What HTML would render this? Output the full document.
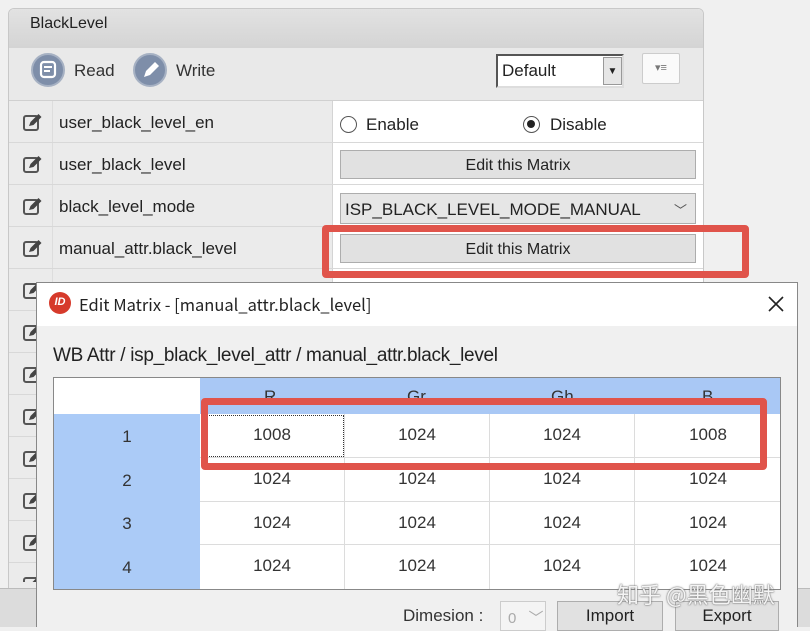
<!DOCTYPE html>
<html><head><meta charset="utf-8"><style>
*{box-sizing:border-box;margin:0;padding:0}
body{width:810px;height:627px;overflow:hidden;background:#f0f0f0;position:relative;font-family:"Liberation Sans",Arial,sans-serif;color:#222}
.a{position:absolute}
.panel{left:8px;top:8px;width:696px;height:600px;border:1px solid #c8c8c8;border-radius:6px 6px 0 0;background:#fff;overflow:hidden}
.hdr{left:0;top:0;width:100%;height:39px;background:linear-gradient(#e2e2e2,#d4d4d4);font-size:16px;padding:6px 0 0 21px;color:#222}
.tb{left:0;top:39px;width:100%;height:53px;background:#e9e9e9;border-bottom:1px solid #d0d0d0}
.circ{width:34px;height:34px;border-radius:50%;background:#7e8ea9;border:2px solid #a6b1c3}
.tbt{font-size:17px;color:#333}
.row{left:0;width:100%;height:42px;border-bottom:1px solid #d8d8d8}
.ic{left:0;width:44px;height:100%;background:#ebebeb;border-right:1px solid #ddd}
.nm{left:44px;width:280px;height:100%;background:#ebebeb;border-right:1px solid #d4d4d4;font-size:17px;padding:12px 0 0 6px;color:#222}
.btn{background:#e1e1e1;border:1px solid #adadad;font-size:16px;text-align:center;color:#222}
.red{border:7px solid #e0544b;border-radius:4px}
.cell{text-align:center;font-size:17px;color:#333;border-right:1px solid #dcdcdc;border-bottom:1px solid #dcdcdc;background:#fff}
.rh{text-align:center;font-size:17px;color:#333;background:#abcbf7}
</style></head><body>
<div class="a panel">
 <div class="a hdr">BlackLevel</div>
 <div class="a tb">
  <div class="a circ" style="left:22px;top:5px"><svg width="30" height="30" viewBox="0 0 30 30"><rect x="8" y="7" width="14" height="15" rx="3" fill="none" stroke="#fff" stroke-width="2.2"/><path d="M11 12h8M11 16h6" stroke="#fff" stroke-width="2"/></svg></div>
  <div class="a tbt" style="left:65px;top:13px">Read</div>
  <div class="a circ" style="left:124px;top:5px"><svg width="30" height="30" viewBox="0 0 30 30"><path d="M9 22l2-6 9-9 4 4-9 9z" fill="#fff"/></svg></div>
  <div class="a tbt" style="left:167px;top:13px">Write</div>
  <div class="a" style="left:487px;top:6px;width:128px;height:34px;background:#fff;border:2px solid #555;border-right-color:#ddd;border-bottom-color:#ddd;font-size:17px;padding:5px 4px">Default</div>
  <div class="a" style="left:594px;top:9px;width:19px;height:28px;background:#e6e6e6;border:1px solid #999;font-size:10px;text-align:center;padding-top:8px">▼</div>
  <div class="a" style="left:633px;top:5px;width:38px;height:31px;background:#fafafa;border:1px solid #ccc;border-radius:2px;font-size:11px;text-align:center;padding-top:7px;color:#777">▾≡</div>
 </div>
 <div class="a" style="left:0;top:92px;width:100%;height:508px">
  <div class="a row" style="top:0"><div class="a ic"></div><div class="a nm">user_black_level_en</div>
   <div class="a" style="left:331px;top:15px;width:17px;height:17px;border:1.5px solid #555;border-radius:50%"></div><div class="a" style="left:357px;top:14px;font-size:17px">Enable</div>
   <div class="a" style="left:514px;top:15px;width:17px;height:17px;border:1.5px solid #555;border-radius:50%"><div style="margin:3px;width:8px;height:8px;border-radius:50%;background:#222"></div></div><div class="a" style="left:541px;top:14px;font-size:17px">Disable</div></div>
  <div class="a row" style="top:42px"><div class="a ic"></div><div class="a nm">user_black_level</div>
   <div class="a btn" style="left:331px;top:7px;width:356px;height:29px;padding-top:6px">Edit this Matrix</div></div>
  <div class="a row" style="top:84px"><div class="a ic"></div><div class="a nm">black_level_mode</div>
   <div class="a" style="left:331px;top:8px;width:356px;height:31px;background:#e6e6e6;border:1px solid #adadad;font-size:17px;padding:6px 4px">ISP_BLACK_LEVEL_MODE_MANUAL<span style="position:absolute;right:8px;top:6px;font-size:13px;color:#555">﹀</span></div></div>
  <div class="a row" style="top:126px"><div class="a ic"></div><div class="a nm">manual_attr.black_level</div>
   <div class="a btn" style="left:331px;top:7px;width:356px;height:29px;padding-top:6px">Edit this Matrix</div></div>
  <div class="a row" style="top:168px"><div class="a ic"></div><div class="a nm"></div></div>
  <div class="a row" style="top:210px"><div class="a ic"></div><div class="a nm"></div></div>
  <div class="a row" style="top:252px"><div class="a ic"></div><div class="a nm"></div></div>
  <div class="a row" style="top:294px"><div class="a ic"></div><div class="a nm"></div></div>
  <div class="a row" style="top:336px"><div class="a ic"></div><div class="a nm"></div></div>
  <div class="a row" style="top:378px"><div class="a ic"></div><div class="a nm"></div></div>
  <div class="a row" style="top:420px"><div class="a ic"></div><div class="a nm"></div></div>
  <div class="a row" style="top:462px"><div class="a ic"></div><div class="a nm"></div></div>
 </div>
</div>
<svg class="a" style="left:22px;top:112px" width="22" height="470" viewBox="0 0 22 470">
 <defs><g id="e"><rect x="2" y="4" width="14" height="14" rx="2" fill="none" stroke="#555" stroke-width="2"/><path d="M7 14l1.5-4 8-8 3 3-8 8z" fill="#444"/></g></defs>
 <use href="#e" y="0"/><use href="#e" y="42"/><use href="#e" y="84"/><use href="#e" y="126"/><use href="#e" y="168"/><use href="#e" y="210"/><use href="#e" y="252"/><use href="#e" y="294"/><use href="#e" y="336"/><use href="#e" y="378"/><use href="#e" y="420"/><use href="#e" y="462"/>
</svg>
<div class="a" style="left:0;top:588px;width:810px;height:39px;background:#dcdcdc;border-top:1px solid #bbb"></div>
<div class="a red" style="left:322px;top:225px;width:427px;height:53px"></div>

<div class="a" style="left:36px;top:282px;width:762px;height:345px;background:#f0f0f0;border:1px solid #888;border-bottom:none">
 <div class="a" style="left:0;top:0;width:100%;height:43px;background:#fff"></div>
 <div class="a" style="left:12px;top:9px;width:22px;height:22px;border-radius:50%;background:#d63a2b;color:#fff;font-size:11px;font-weight:bold;text-align:center;padding-top:4px;font-style:italic">ID</div>
 <div class="a" style="left:42px;top:9px;font-size:16.5px;font-family:'Noto Sans CJK SC','Liberation Sans',sans-serif;color:#222">Edit Matrix - [manual_attr.black_level]</div>
 <svg class="a" style="left:730px;top:12px" width="18" height="18" viewBox="0 0 18 18"><path d="M2 2L16 16M16 2L2 16" stroke="#222" stroke-width="1.6"/></svg>
 <div class="a" style="left:16px;top:62px;font-size:19px;color:#222;letter-spacing:-0.3px">WB Attr / isp_black_level_attr / manual_attr.black_level</div>
 <div class="a" style="left:16px;top:94px;width:728px;height:213px;border:1px solid #888;background:#fff;overflow:hidden">
  <div class="a" style="left:146px;top:0;width:582px;height:36px;background:#a9c8f5"></div>
  <div class="a" style="left:0;top:36px;width:146px;height:176px;background:#abcbf7"></div>
  <div class="a" style="left:210px;top:9px;font-size:17px;color:#333">R</div>
  <div class="a" style="left:353px;top:9px;font-size:17px;color:#333">Gr</div>
  <div class="a" style="left:497px;top:9px;font-size:17px;color:#333">Gh</div>
  <div class="a" style="left:648px;top:9px;font-size:17px;color:#333">B</div>
  <div class="a" style="left:0;top:36px;width:728px;height:176px">
   <div class="a rh" style="left:0;top:13px;width:146px">1</div>
   <div class="a rh" style="left:0;top:57px;width:146px">2</div>
   <div class="a rh" style="left:0;top:100px;width:146px">3</div>
   <div class="a rh" style="left:0;top:144px;width:146px">4</div>
  </div>
  <div class="a" style="left:146px;top:36px;width:582px;height:176px;display:grid;grid-template-columns:145px 145px 145px 147px;grid-template-rows:44px 44px 43px 45px">
   <div class="cell" style="padding-top:11px;outline:1px dotted #333;outline-offset:-2px">1008</div><div class="cell" style="padding-top:11px">1024</div><div class="cell" style="padding-top:11px">1024</div><div class="cell" style="padding-top:11px">1008</div>
   <div class="cell" style="padding-top:11px">1024</div><div class="cell" style="padding-top:11px">1024</div><div class="cell" style="padding-top:11px">1024</div><div class="cell" style="padding-top:11px">1024</div>
   <div class="cell" style="padding-top:11px">1024</div><div class="cell" style="padding-top:11px">1024</div><div class="cell" style="padding-top:11px">1024</div><div class="cell" style="padding-top:11px">1024</div>
   <div class="cell" style="padding-top:11px">1024</div><div class="cell" style="padding-top:11px">1024</div><div class="cell" style="padding-top:11px">1024</div><div class="cell" style="padding-top:11px">1024</div>
  </div>
 </div>
 <div class="a" style="left:366px;top:323px;font-size:17px;color:#333">Dimesion :</div>
 <div class="a" style="left:463px;top:318px;width:46px;height:30px;border:1px solid #ccc;background:#f4f4f4;font-size:15px;color:#aaa;padding:5px 0 0 7px">0 <span style="margin-left:8px">﹀</span></div>
 <div class="a" style="left:520px;top:318px;width:106px;height:30px;background:#e1e1e1;border:1px solid #adadad;font-size:17px;text-align:center;padding-top:4px">Import</div>
 <div class="a" style="left:638px;top:318px;width:104px;height:30px;background:#e1e1e1;border:1px solid #adadad;font-size:17px;text-align:center;padding-top:4px">Export</div>
</div>
<div class="a red" style="left:201px;top:398px;width:566px;height:72px"></div>
<div class="a" style="left:617px;top:578px;font-size:22px;color:rgba(255,255,255,0.92);text-shadow:0 0 2px #777,0 0 1px #555;font-family:'Noto Sans CJK SC','Liberation Sans',sans-serif">知乎 @黑色幽默</div>
</body></html>
